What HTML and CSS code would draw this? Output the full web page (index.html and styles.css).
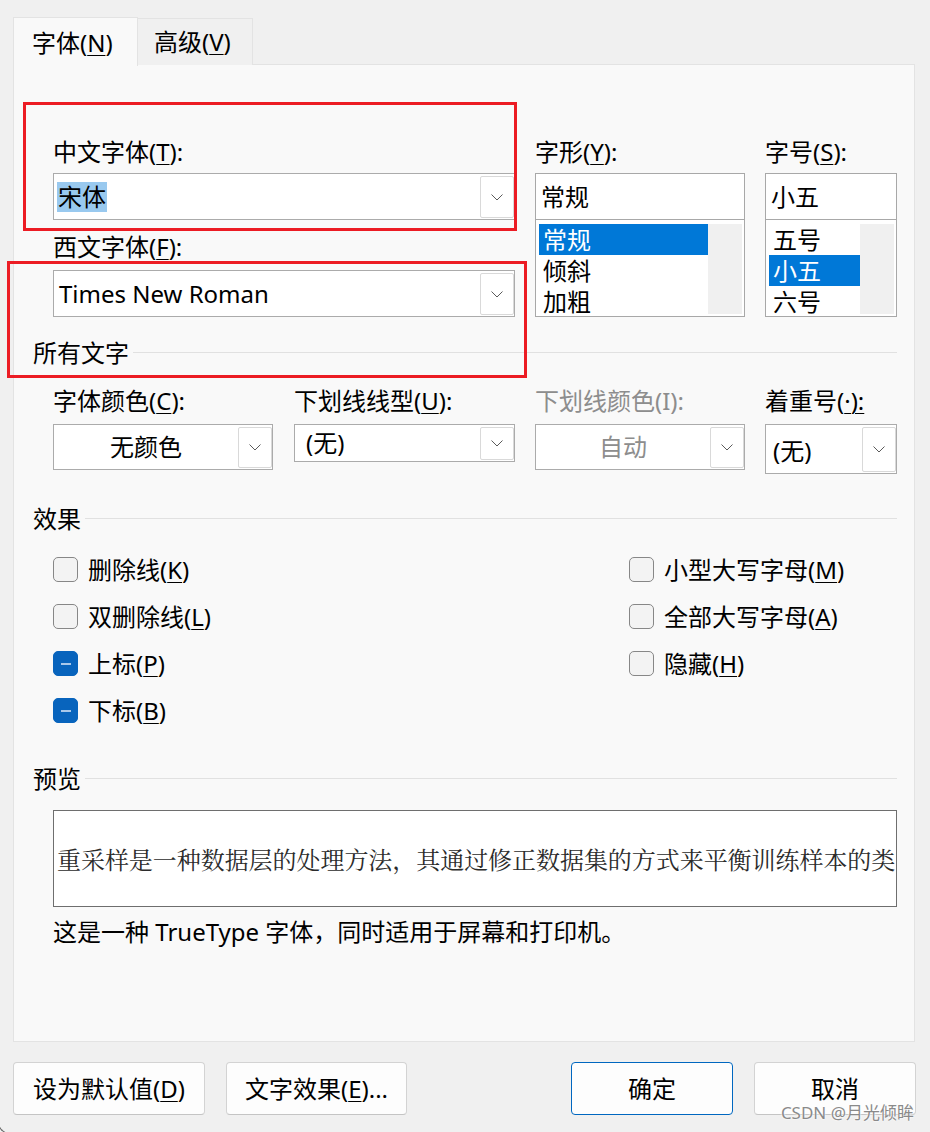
FILE: index.html
```html
<!DOCTYPE html>
<html lang="zh-CN">
<head>
<meta charset="utf-8">
<title>字体</title>
<link rel="stylesheet" href="styles.css">
</head>
<body>
<div class="tabs">
  <div class="tab tab-active">字体(<u>N</u>)</div>
  <div class="tab tab-idle">高级(<u>V</u>)</div>
</div>

<div class="panel">
  <div class="font-grid">
    <div class="col">
      <div class="label">中文字体(<u>T</u>):</div>
      <div class="combo combo-tall">
        <div class="combo-text"><span class="sel-text">宋体</span></div>
        <div class="drop"><svg width="12" height="7" viewBox="0 0 12 7"><polyline points="0.5,0.5 6,6 11.5,0.5" fill="none" stroke="#5a5a5a" stroke-width="1"/></svg></div>
      </div>
      <div class="label label-mid">西文字体(<u>F</u>):</div>
      <div class="combo combo-tall">
        <div class="combo-text"><span class="latin">Times New Roman</span></div>
        <div class="drop"><svg width="12" height="7" viewBox="0 0 12 7"><polyline points="0.5,0.5 6,6 11.5,0.5" fill="none" stroke="#5a5a5a" stroke-width="1"/></svg></div>
      </div>
    </div>
    <div class="col">
      <div class="label">字形(<u>Y</u>):</div>
      <div class="textbox">常规</div>
      <div class="listbox">
        <div class="items">
          <div class="item item-sel">常规</div>
          <div class="item">倾斜</div>
          <div class="item">加粗</div>
        </div>
        <div class="track"></div>
      </div>
    </div>
    <div class="col">
      <div class="label">字号(<u>S</u>):</div>
      <div class="textbox">小五</div>
      <div class="listbox">
        <div class="items">
          <div class="item">五号</div>
          <div class="item item-sel">小五</div>
          <div class="item">六号</div>
        </div>
        <div class="track"></div>
      </div>
    </div>
  </div>

  <div class="group-title g-all"><span>所有文字</span><div class="rule"></div></div>

  <div class="attr-grid">
    <div class="attr">
      <div class="label">字体颜色(<u>C</u>):</div>
      <div class="combo c1">
        <div class="combo-text center">无颜色</div>
        <div class="drop"><svg width="12" height="7" viewBox="0 0 12 7"><polyline points="0.5,0.5 6,6 11.5,0.5" fill="none" stroke="#5a5a5a" stroke-width="1"/></svg></div>
      </div>
    </div>
    <div class="attr">
      <div class="label">下划线线型(<u>U</u>):</div>
      <div class="combo c2">
        <div class="combo-text pad">(无)</div>
        <div class="drop"><svg width="12" height="7" viewBox="0 0 12 7"><polyline points="0.5,0.5 6,6 11.5,0.5" fill="none" stroke="#5a5a5a" stroke-width="1"/></svg></div>
      </div>
    </div>
    <div class="attr">
      <div class="label disabled">下划线颜色(I):</div>
      <div class="combo c3">
        <div class="combo-text center disabled">自动</div>
        <div class="drop"><svg width="12" height="7" viewBox="0 0 12 7"><polyline points="0.5,0.5 6,6 11.5,0.5" fill="none" stroke="#5a5a5a" stroke-width="1"/></svg></div>
      </div>
    </div>
    <div class="attr">
      <div class="label">着重号(<u>·):</u></div>
      <div class="combo c4">
        <div class="combo-text pad low">(无)</div>
        <div class="drop"><svg width="12" height="7" viewBox="0 0 12 7"><polyline points="0.5,0.5 6,6 11.5,0.5" fill="none" stroke="#5a5a5a" stroke-width="1"/></svg></div>
      </div>
    </div>
  </div>

  <div class="group-title g-fx"><span>效果</span><div class="rule"></div></div>

  <div class="effects">
    <div class="fx-col">
      <div class="check"><span class="box"></span><span class="check-label">删除线(<u>K</u>)</span></div>
      <div class="check"><span class="box"></span><span class="check-label">双删除线(<u>L</u>)</span></div>
      <div class="check"><span class="box box-mixed"><span class="dash"></span></span><span class="check-label">上标(<u>P</u>)</span></div>
      <div class="check"><span class="box box-mixed"><span class="dash"></span></span><span class="check-label">下标(<u>B</u>)</span></div>
    </div>
    <div class="fx-col">
      <div class="check"><span class="box"></span><span class="check-label">小型大写字母(<u>M</u>)</span></div>
      <div class="check"><span class="box"></span><span class="check-label">全部大写字母(<u>A</u>)</span></div>
      <div class="check"><span class="box"></span><span class="check-label">隐藏(<u>H</u>)</span></div>
    </div>
  </div>

  <div class="group-title g-pv"><span>预览</span><div class="rule"></div></div>

  <div class="preview"><span class="preview-text">重采样是一种数据层的处理方法，其通过修正数据集的方式来平衡训练样本的类</span></div>
  <div class="info">这是一种 TrueType 字体，同时适用于屏幕和打印机。</div>
</div>

<div class="buttons">
  <div class="btn-group">
    <div class="btn b-default">设为默认值(<u>D</u>)</div>
    <div class="btn b-effect">文字效果(<u>E</u>)...</div>
  </div>
  <div class="btn-group">
    <div class="btn b-ok">确定</div>
    <div class="btn b-cancel">取消</div>
  </div>
</div>

<div class="mark mark-1"></div>
<div class="mark mark-2"></div>
<div class="watermark">CSDN @月光倾眸</div>
<div class="corner"></div>
</body>
</html>
```

FILE: styles.css
```css
html, body {
  margin: 0;
  padding: 0;
}
body {
  width: 930px;
  height: 1132px;
  background: #f0f0f0;
  font-family: "Noto Sans", "Noto Sans CJK SC", sans-serif;
  font-size: 24px;
  line-height: 30px;
  color: #000;
  position: relative;
  overflow: hidden;
}
u {
  text-decoration: underline;
  text-decoration-thickness: 1px;
  text-underline-offset: 3px;
}

/* tabs */
.tabs {
  display: flex;
  align-items: flex-end;
  height: 65px;
  padding-left: 13px;
  box-sizing: border-box;
}
.tab {
  box-sizing: border-box;
  white-space: nowrap;
}
.tab-active {
  width: 125px;
  height: 49px;
  padding: 10px 0 0 18px;
  background: #f9f9f9;
  border: 1px solid #e3e3e3;
  border-bottom: none;
  position: relative;
  z-index: 1;
  margin-bottom: -1px;
}
.tab-idle {
  width: 115px;
  height: 47px;
  padding: 8px 0 0 16px;
  background: #f0f0f0;
  border-top: 1px solid #e3e3e3;
  border-right: 1px solid #e3e3e3;
}

/* panel */
.panel {
  box-sizing: border-box;
  margin: -1px 0 0 13px;
  width: 902px;
  height: 978px;
  background: #f9f9f9;
  border: 1px solid #e3e3e3;
  padding: 72px 17px 0 19px;
}

.label {
  height: 30px;
  margin-bottom: 6px;
  white-space: nowrap;
}
.label-mid {
  margin-top: 12px;
  margin-bottom: 8px;
}
.disabled {
  color: #8d8d8d;
}

.font-grid {
  margin-left: 20px;
  display: grid;
  grid-template-columns: 462px 210px 132px;
  column-gap: 20px;
}
.col {
  display: flex;
  flex-direction: column;
}

.combo {
  box-sizing: border-box;
  display: flex;
  background: #fff;
  border: 1px solid #ababab;
}
.combo-tall {
  height: 47px;
}
.combo-text {
  flex: 1;
  display: flex;
  align-items: center;
  padding-left: 3px;
  white-space: nowrap;
  overflow: hidden;
}
.combo-text.center {
  justify-content: center;
  padding-left: 0;
}
.combo-text.pad {
  padding-left: 11px;
}
.combo-text.low {
  padding-left: 7px;
  padding-top: 4px;
}
.sel-text {
  background: #99c9ef;
  padding: 0 1px;
  line-height: 30px;
}
.latin {
  margin-left: 2px;
}
.drop {
  box-sizing: border-box;
  width: 34px;
  margin: 2px 0 1px 0;
  border: 1px solid #d9d9d9;
  border-radius: 2px;
  background: #fff;
  display: flex;
  align-items: center;
  justify-content: center;
}

.textbox {
  box-sizing: border-box;
  height: 47px;
  background: #fff;
  border: 1px solid #a8a8a8;
  padding-left: 5px;
  display: flex;
  align-items: center;
}
.listbox {
  box-sizing: border-box;
  height: 97px;
  background: #fff;
  border: 1px solid #a8a8a8;
  border-top: none;
  padding: 4px 2px 2px 3px;
  display: flex;
  overflow: hidden;
}
.items {
  flex: 1;
  overflow: hidden;
}
.item {
  height: 31px;
  line-height: 31px;
  padding-left: 4px;
  white-space: nowrap;
}
.item-sel {
  background: #0078d7;
  color: #fff;
}
.track {
  width: 34px;
  background: #f0f0f0;
}

/* group titles */
.group-title {
  display: flex;
  align-items: center;
  gap: 4px;
  height: 30px;
}
.rule {
  flex: 1;
  height: 1px;
  background: #e1e1e1;
  margin-top: -2px;
}
.g-all { margin-top: 21px; }
.g-fx { margin-top: 30px; }
.g-pv { margin-top: 30px; }

/* attributes row */
.attr-grid {
  margin-left: 20px;
  margin-top: 18px;
  display: grid;
  grid-template-columns: 241px 241px 230px 132px;
  align-items: start;
}
.attr .label {
  margin-bottom: 8px;
}
.c1 { width: 220px; height: 46px; }
.c2 { width: 221px; height: 38px; }
.c3 { width: 210px; height: 46px; }
.c4 { width: 132px; height: 50px; }

/* effects */
.effects {
  margin-left: 20px;
  margin-top: 12px;
  display: grid;
  grid-template-columns: 576px 1fr;
}
.check {
  height: 47px;
  display: flex;
  align-items: center;
  gap: 10px;
  white-space: nowrap;
}
.check-label {
  white-space: nowrap;
}
.box {
  box-sizing: border-box;
  width: 25px;
  height: 25px;
  border: 1px solid #878787;
  border-radius: 5px;
  background: #f3f3f3;
  display: flex;
  align-items: center;
  justify-content: center;
  flex: none;
}
.box-mixed {
  background: #0864bd;
  border-color: #0864bd;
}
.dash {
  width: 10px;
  height: 2px;
  background: #a9c8ea;
}

/* preview */
.preview {
  box-sizing: border-box;
  margin: 16px 0 0 20px;
  height: 97px;
  background: #fff;
  border: 1px solid #6e6e6e;
  padding: 0 0 0 3px;
  display: flex;
  align-items: center;
  overflow: hidden;
}
.preview-text {
  font-family: "Noto Serif CJK SC", "Noto Sans CJK SC", serif;
  color: #2b2b2b;
  white-space: nowrap;
  letter-spacing: -0.05px;
}
.info {
  margin: 10px 0 0 20px;
  white-space: nowrap;
}

/* buttons */
.buttons {
  margin-top: 20px;
  padding: 0 14px 0 13px;
  display: flex;
  justify-content: space-between;
}
.btn-group {
  display: flex;
  gap: 21px;
}
.btn {
  box-sizing: border-box;
  height: 53px;
  background: #fdfdfd;
  border: 1px solid #d3d3d3;
  border-bottom-color: #c4c4c4;
  border-radius: 4px;
  display: flex;
  align-items: center;
  justify-content: center;
  white-space: nowrap;
}
.b-default { width: 192px; }
.b-effect { width: 181px; }
.b-ok { width: 162px; border-color: #0067c0; }
.b-cancel { width: 162px; }

/* annotations */
.mark {
  position: absolute;
  box-sizing: border-box;
  border: 3px solid #ec1c24;
}
.mark-1 {
  left: 23px;
  top: 102px;
  width: 494px;
  height: 129px;
}
.mark-2 {
  left: 7px;
  top: 261px;
  width: 520px;
  height: 117px;
}
.watermark {
  position: absolute;
  right: 16px;
  bottom: 7px;
  font-size: 17px;
  line-height: 24px;
  color: #8a8a8a;
  text-shadow: 0 0 2px #fff, 0 0 2px #fff;
  white-space: nowrap;
}
.corner {
  position: absolute;
  left: -2px;
  bottom: -2px;
  width: 14px;
  height: 14px;
  border-left: 1px solid #6a6a6a;
  border-bottom: 1px solid #6a6a6a;
  border-bottom-left-radius: 12px;
  box-sizing: border-box;
}
```
